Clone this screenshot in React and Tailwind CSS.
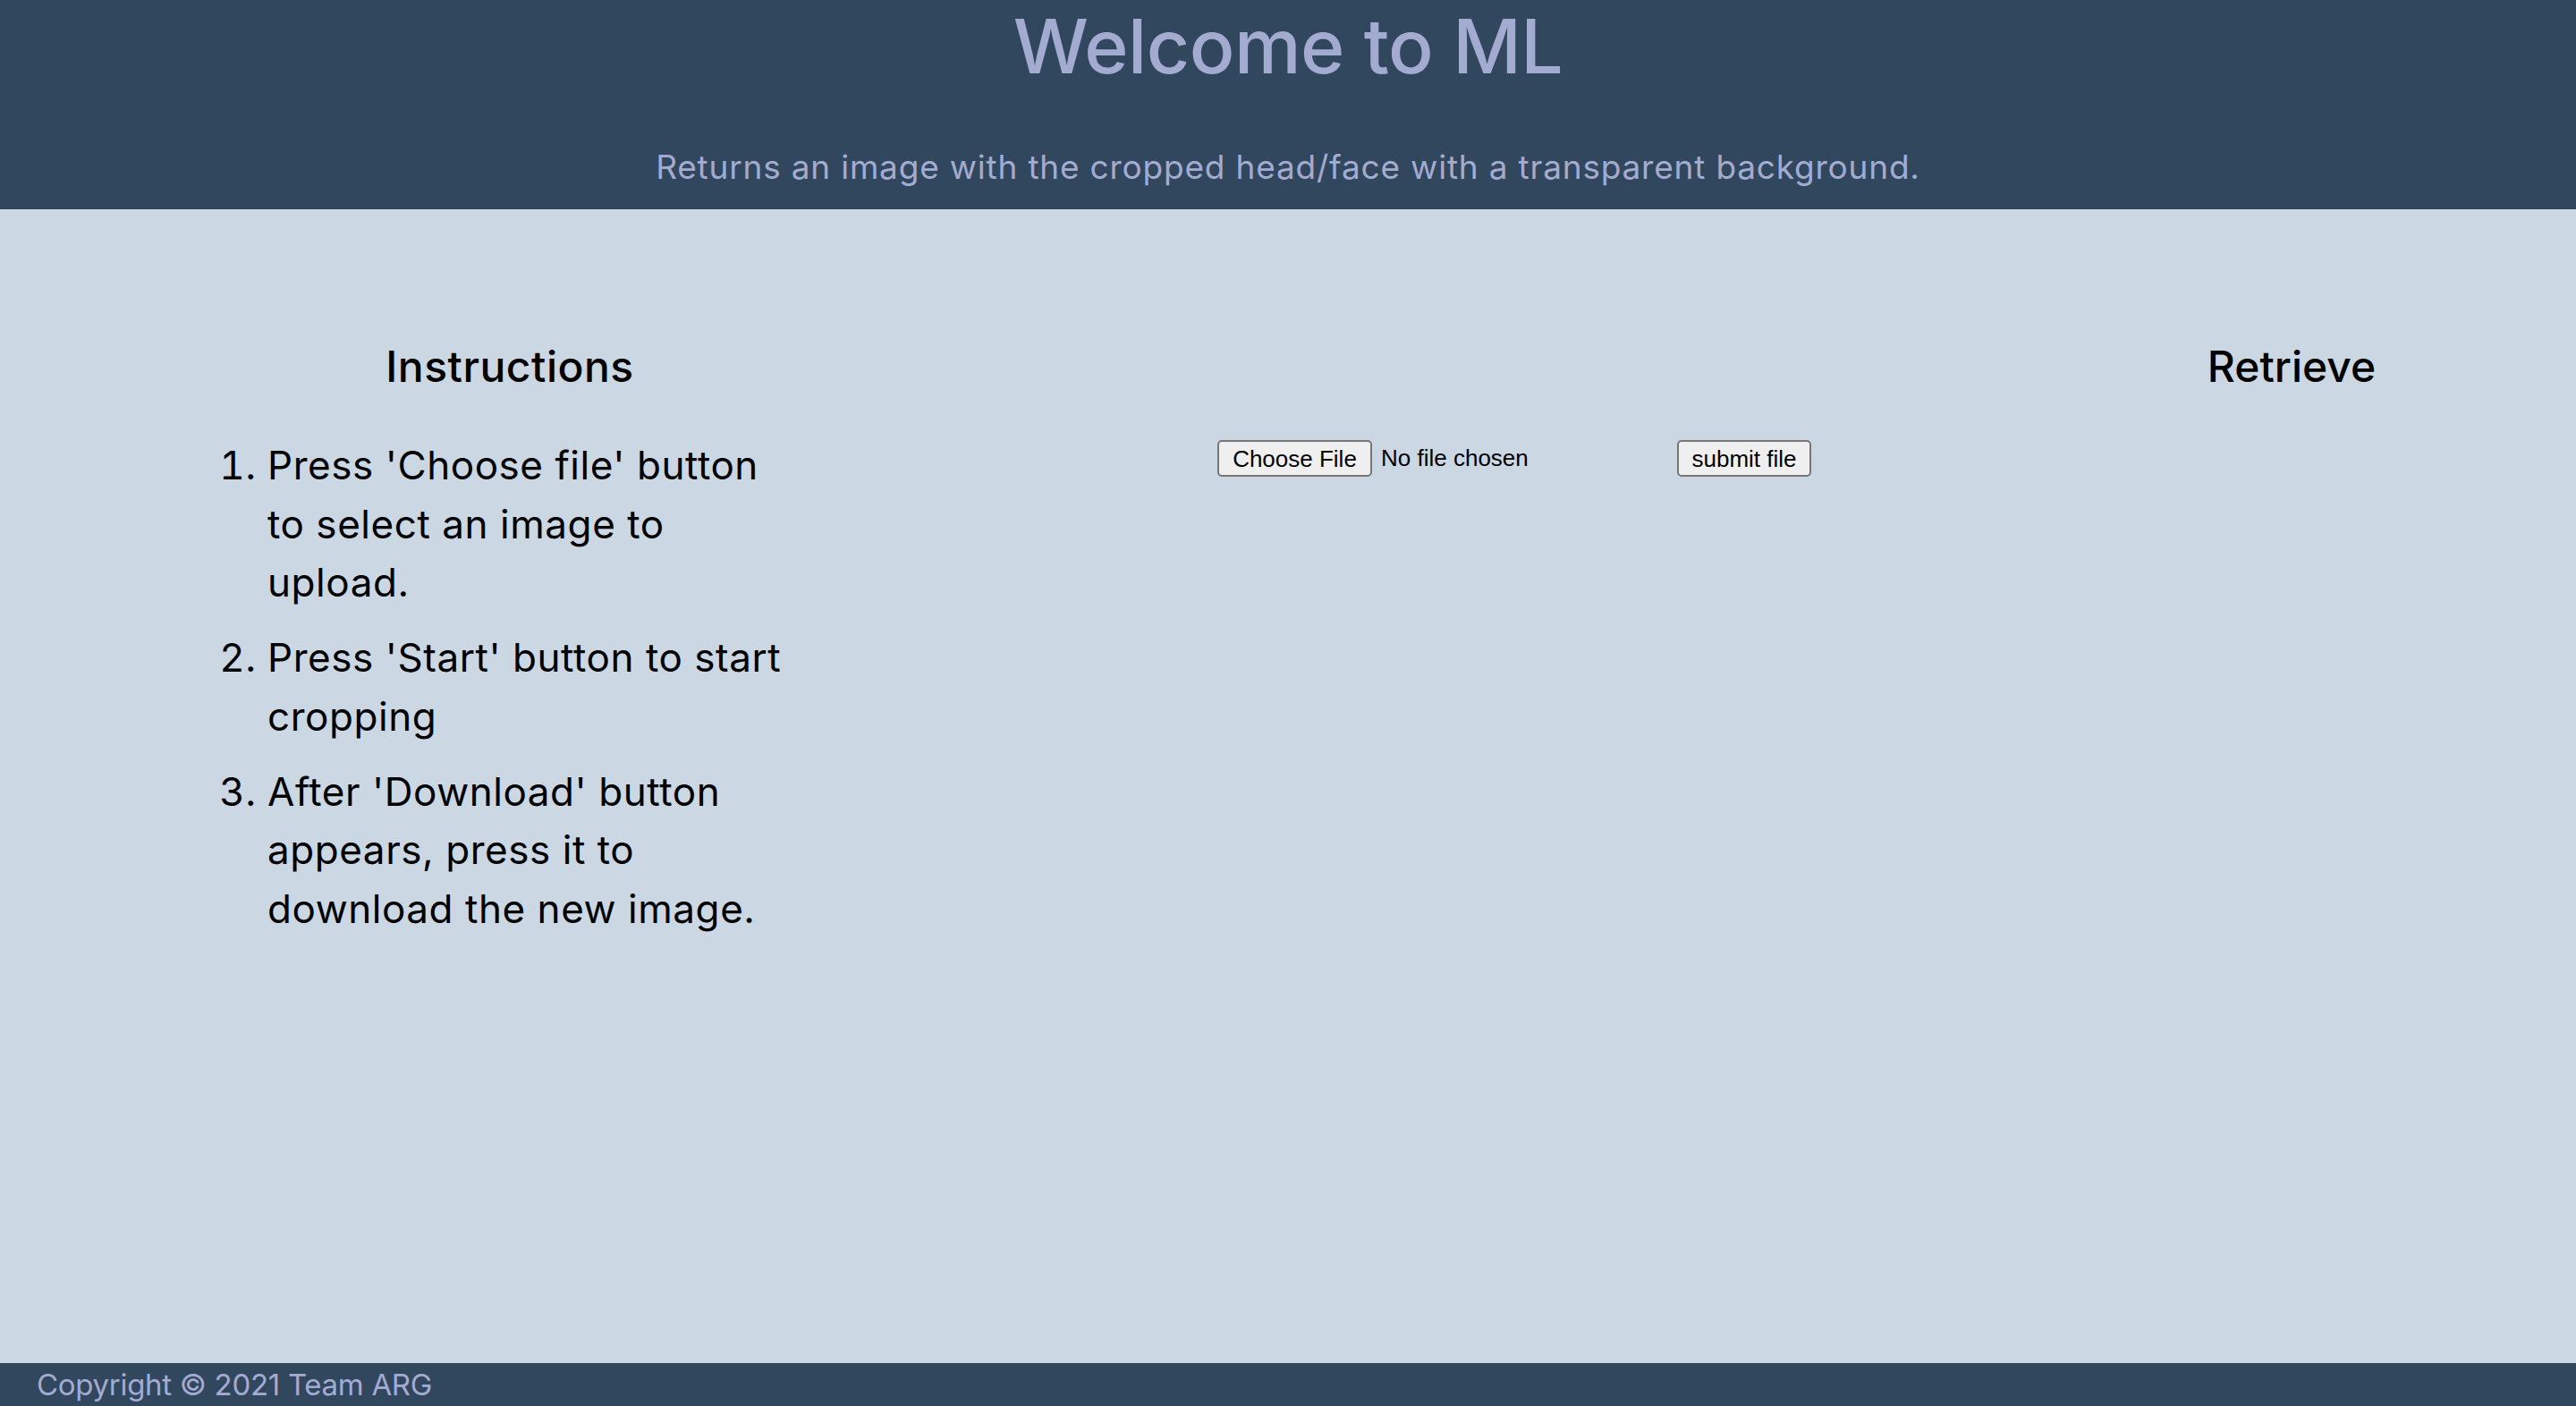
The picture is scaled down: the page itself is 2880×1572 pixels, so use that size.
import React from 'react';

const steps = [
    "Press 'Choose file' button to select an image to upload.",
    "Press 'Start' button to start cropping",
    "After 'Download' button appears, press it to download the new image.",
];

const App = () => {
    return (
        <div className="h-screen flex flex-col bg-[#cbd7e3] font-['Inter',sans-serif] overflow-hidden">
            {/* Header */}
            <header className="h-[234px] shrink-0 bg-[#31475e] text-center text-[#a4abd0]">
                <h1 className="pt-[10px] text-[84px] leading-[84px] font-medium tracking-[-0.5px]">Welcome to ML</h1>
                <p className="mt-[74px] text-[37px] leading-[37px] tracking-[0.8px]">
                    Returns an image with the cropped head/face with a transparent background.
                </p>
            </header>

            {/* Main content */}
            <main className="flex-1 flex text-black">
                <section className="ml-[260px] w-[620px] pt-[152px]">
                    <h2 className="text-center text-[48px] leading-[48px] font-medium tracking-[0.5px]">Instructions</h2>
                    <ol className="mt-[54px] pl-[39px] list-decimal text-[44px] leading-[65.5px] tracking-[0.55px]">
                        {steps.map((step, i) => (
                            <li key={i} className="mb-[18.5px]">{step}</li>
                        ))}
                    </ol>
                </section>

                <section className="w-[1372px] pl-[481px] pt-[258px]">
                    <form className="flex items-center font-['Liberation_Sans',Arial,sans-serif] text-[26px]" onSubmit={(e) => e.preventDefault()}>
                        <button type="button" className="w-[173px] h-[41px] bg-[#efefef] border-2 border-[#767676] rounded-[5px] text-black">
                            Choose File
                        </button>
                        <span className="ml-[10px] w-[331px]">No file chosen</span>
                        <button type="submit" className="w-[150px] h-[41px] bg-[#efefef] border-2 border-[#767676] rounded-[5px] text-black">
                            submit file
                        </button>
                    </form>
                </section>

                <section className="w-[620px] pt-[152px]">
                    <h2 className="text-center text-[48px] leading-[48px] font-medium">Retrieve</h2>
                </section>
            </main>

            {/* Footer */}
            <footer className="h-[48px] shrink-0 bg-[#31475e] text-[#a4abd0] pl-[41px] text-[33px] leading-[48px] tracking-[-0.3px]">
                Copyright © 2021 Team ARG
            </footer>
        </div>
    );
};

export default App;
